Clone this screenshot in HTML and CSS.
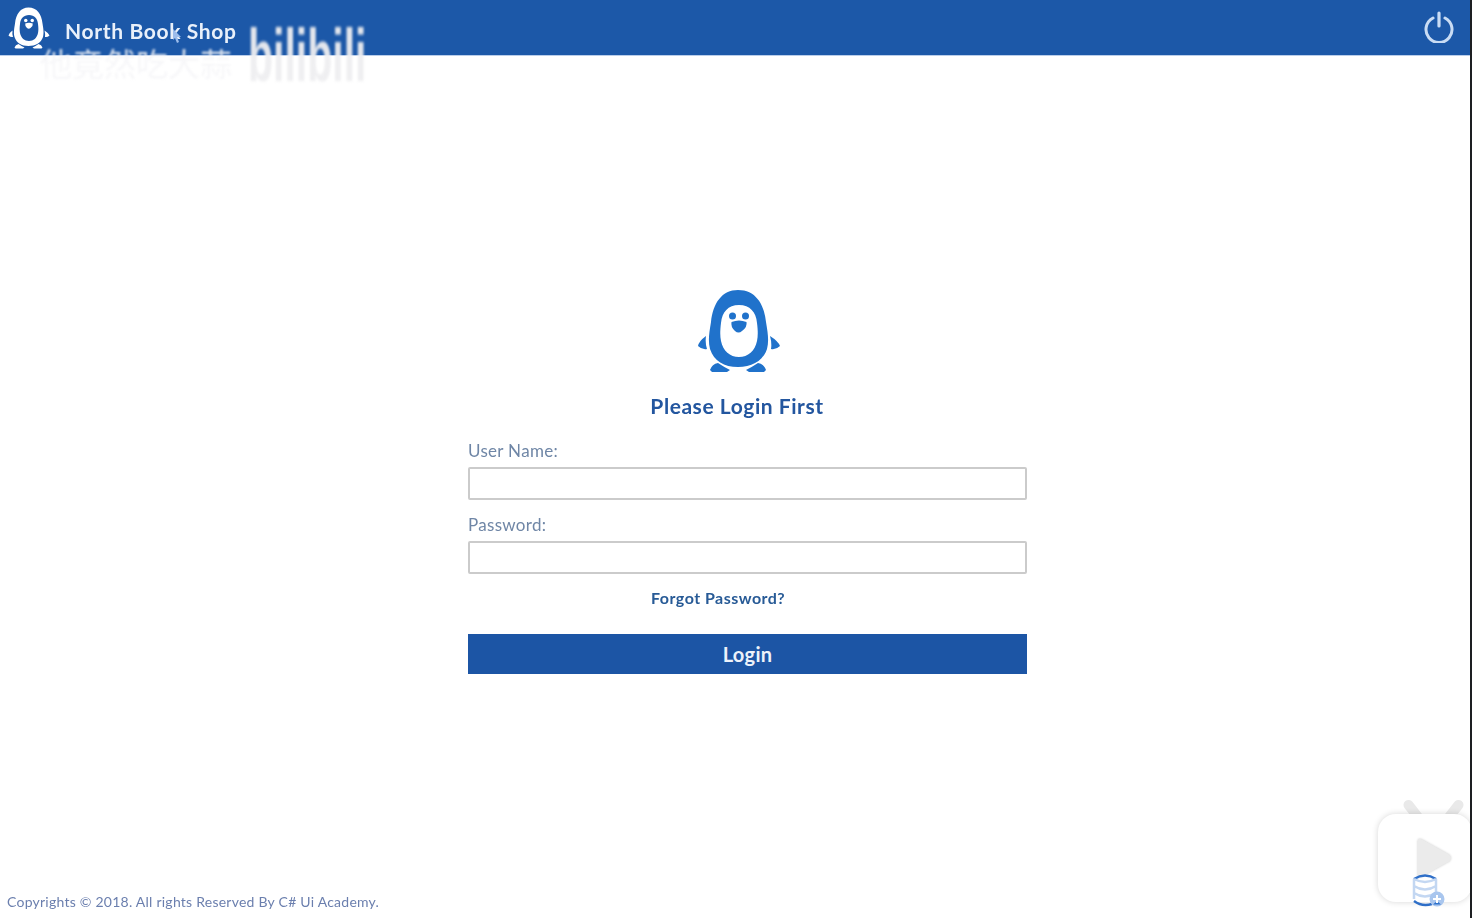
FILE: index.html
```html
<!DOCTYPE html>
<html lang="en">
<head>
  <meta charset="UTF-8">
  <title>North Book Shop</title>
  <link rel="stylesheet" href="styles.css">
</head>
<body>
  <svg class="defs" width="0" height="0">
    <symbol id="penguin" viewBox="0 0 84 84">
      <path class="p-body" fill-rule="evenodd" d="M41 1C58 1 67 14 69 33C71 45 72 52 70 60C66 72 55 78 41 78C27 78 17 72 13 60C11 52 12 45 14 33C16 14 25 1 41 1ZM42 16C31 16 25 23 24 34C23 42 23 47 24 52C26 62 33 68 42 68C51 68 58 62 60 52C61 47 61 42 60 34C59 23 53 16 42 16Z"/>
      <path class="p-body" d="M9 47Q2 52 1 57Q5 61 10 60Q8 54 9 47ZM73 47Q81 52 83 57Q79 61 74 60Q75 54 73 47Z"/>
      <path class="p-body" d="M13 81Q15 75 21 74Q27 78 33 81L30 83H15ZM69 81Q67 75 61 74Q55 78 49 81L52 83H67Z"/>
      <circle class="p-face" cx="35.5" cy="27" r="3.5"/>
      <circle class="p-face" cx="48.5" cy="27" r="3.5"/>
      <path class="p-face" d="M34.5 33Q42 30 49.5 33Q50.5 38 45 42Q41.5 45 38 42Q33.5 38 34.5 33Z"/>
    </symbol>
  </svg>

  <header class="topbar">
    <div class="brand">
      <svg class="brand-logo"><use href="#penguin"/></svg>
      <span class="brand-name">North Book Shop</span>
    </div>
    <svg class="power" viewBox="0 0 32 32" fill="none" stroke-linecap="round">
      <path d="M10 7A13 13 0 1 0 22 7" stroke-width="3"/>
      <path d="M16 2V15" stroke-width="3.2"/>
    </svg>
  </header>

  <main class="login">
    <svg class="login-logo"><use href="#penguin"/></svg>
    <h1 class="login-title">Please Login First</h1>
    <form class="login-form">
      <label class="field-label" for="username">User Name:</label>
      <input class="field-input" id="username" type="text">
      <label class="field-label" for="password">Password:</label>
      <input class="field-input" id="password" type="password">
      <a class="forgot" href="#">Forgot Password?</a>
      <button class="login-btn" type="button">Login</button>
    </form>
  </main>

  <footer class="copy">Copyrights © 2018. All rights Reserved By C# Ui Academy.</footer>

  <!-- video watermarks and cursor sit on top of the app -->
  <div class="wm-text">他竟然吃大蒜</div>
  <div class="wm-logo">bilibili</div>
  <svg class="cursor" viewBox="0 0 10 14"><path d="M1 0L9 8H5L7 13L5 14L3 9L1 11Z"/></svg>
  <div class="tv">
    <span class="ear ear-l"></span>
    <span class="ear ear-r"></span>
    <div class="tv-box">
      <svg class="tv-play" viewBox="0 0 40 44"><path d="M6 7Q6 3 10 5L35 19Q38 22 35 25L10 39Q6 41 6 37Z"/></svg>
      <svg class="tv-db" viewBox="0 0 36 34" fill="none">
        <path d="M4 6Q15 -1 26 6" stroke="#2f6fc8" stroke-width="2.5"/>
        <path d="M4 6V26M26 6V22M4 6Q15 12 26 6M4 13Q15 20 26 13M4 20Q15 27 26 20" stroke="#c3d7f2" stroke-width="2.5"/>
        <path d="M4 28Q12 34 22 31" stroke="#2f6fc8" stroke-width="2.5"/>
        <circle cx="27" cy="26" r="7.5" fill="#a9c6ee"/>
        <path d="M27 28L23 31.5H31Z" fill="#2f73cc"/>
        <path d="M23 26H31M27 22V30" stroke="#fff" stroke-width="2"/>
      </svg>
    </div>
  </div>
</body>
</html>
```

FILE: styles.css
```css
html, body {
  height: 100%;
}
html {
  background-color: #1d1f22;
  overflow: hidden;
}
body {
  margin: 0;
  width: 1470px;
  height: 918px;
  font-family: "Lato", "Open Sans", sans-serif;
  background-color: #fff;
  display: flex;
  flex-direction: column;
  overflow: hidden;
  position: relative;
}
.defs {
  position: absolute;
}
.p-body {
  fill: var(--body);
}
.p-face {
  fill: var(--face);
}

/* top bar */
.topbar {
  height: 55px;
  flex: none;
  background-color: #1c58a8;
  border-bottom: 1px solid #b9cdea;
  display: flex;
  align-items: flex-start;
  justify-content: space-between;
  filter: blur(0.4px);
}
.brand {
  display: flex;
  align-items: flex-start;
  padding: 7px 0 0 8px;
}
.brand-logo {
  width: 42px;
  height: 42px;
  --body: #fff;
  --face: #fff;
}
.brand-name {
  margin: 14px 0 0 15px;
  font-size: 21px;
  line-height: 20px;
  font-weight: 700;
  letter-spacing: 0.65px;
  color: #e9f0fa;
}
.power {
  width: 32px;
  height: 32px;
  margin: 11px 15px 0 0;
  stroke: #c9dcf4;
}

/* login form */
.login {
  flex: 1;
  display: flex;
  flex-direction: column;
  align-items: flex-start;
  padding: 233px 0 0 468px;
}
.login-logo {
  width: 84px;
  height: 84px;
  margin-left: 229px;
  --body: #2072cb;
  --face: #2072cb;
  filter: blur(0.4px);
}
.login-title {
  width: 538px;
  margin: 20px 0 0;
  text-align: center;
  font-size: 21px;
  line-height: 26px;
  font-weight: 700;
  letter-spacing: 0.55px;
  color: #23569f;
  filter: blur(0.4px);
}
.login-form {
  width: 559px;
  margin-top: 22px;
  display: flex;
  flex-direction: column;
}
.field-label {
  font-size: 17px;
  line-height: 20px;
  letter-spacing: 0.3px;
  color: #6f86a6;
  filter: blur(0.4px);
}
.field-input {
  box-sizing: border-box;
  width: 100%;
  height: 33px;
  margin: 6px 0 15px;
  border: 2px solid #cbcbcb;
  border-radius: 2px;
  background-color: #fff;
}
.forgot {
  margin: -1px 0 0 183px;
  font-size: 16px;
  line-height: 20px;
  font-weight: 700;
  text-decoration: none;
  letter-spacing: 0.48px;
  color: #275a96;
  filter: blur(0.4px);
}
.login-btn {
  height: 40px;
  margin-top: 26px;
  border: none;
  background-color: #1c55a5;
  color: #edf2fa;
  font-family: inherit;
  font-size: 20px;
  font-weight: 700;
  letter-spacing: 0.3px;
}

/* footer */
.copy {
  flex: none;
  padding: 0 0 8px 7px;
  font-size: 14px;
  line-height: 17px;
  color: #6b7fae;
  letter-spacing: 0.24px;
  filter: blur(0.5px);
}

/* overlays */
.wm-text {
  position: absolute;
  left: 40px;
  top: 44px;
  font-family: "Noto Sans CJK SC", sans-serif;
  font-size: 32px;
  line-height: 36px;
  color: rgba(246, 246, 248, 0.85);
  filter: blur(1px);
}
.wm-logo {
  position: absolute;
  left: 248px;
  top: 2px;
  font-family: "Liberation Sans", sans-serif;
  font-size: 41px;
  line-height: 60px;
  font-weight: 700;
  color: rgba(238, 238, 240, 0.95);
  transform: scaleY(1.8);
  transform-origin: top left;
  filter: blur(0.8px);
}
.cursor {
  position: absolute;
  left: 172px;
  top: 29px;
  width: 10px;
  height: 14px;
  fill: #9dbdec;
}
.tv {
  position: absolute;
  right: -2px;
  top: 797px;
  width: 94px;
  height: 110px;
}
.ear {
  position: absolute;
  top: 1px;
  width: 10px;
  height: 28px;
  border-radius: 5px;
  background-color: #e9e9e9;
}
.ear-l {
  left: 31px;
  transform: rotate(-38deg);
}
.ear-r {
  left: 70px;
  transform: rotate(38deg);
}
.tv-box {
  position: absolute;
  left: 0;
  top: 17px;
  width: 100%;
  height: 88px;
  border-radius: 18px;
  background-color: #fff;
  box-shadow: 0 0 6px rgba(0, 0, 0, 0.16);
}
.tv-play {
  position: absolute;
  left: 33px;
  top: 20px;
  width: 44px;
  height: 48px;
  fill: #ebebeb;
  filter: drop-shadow(0 0 1px rgba(0, 0, 0, 0.2));
}
.tv-db {
  position: absolute;
  left: 32px;
  top: 59px;
  width: 36px;
  height: 34px;
  filter: blur(0.4px);
}
```
